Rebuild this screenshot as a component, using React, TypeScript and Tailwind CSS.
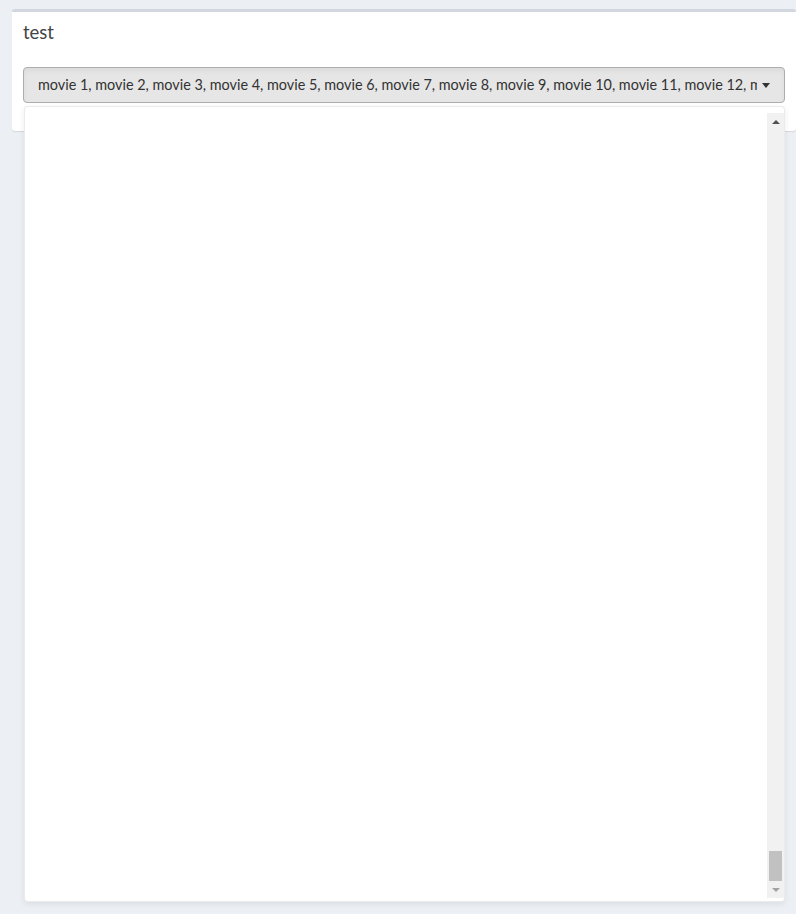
import React from 'react';

const movies = Array.from({ length: 14 }, (_, i) => `movie ${i + 1}`);

export default function App() {
    return (
        <div className="min-h-[914px] bg-[#ecf0f5] pt-[9px] pl-[12px] overflow-hidden" style={{ fontFamily: 'Lato, "Open Sans", sans-serif' }}>
            <div className="w-[784px] bg-white border-t-[3px] border-[#d2d6de] rounded-[3px] shadow-[0_1px_1px_rgba(0,0,0,0.1)]">
                <div className="px-[11px] pt-[10px]">
                    <h3 className="text-[18.5px] leading-[20px] text-[#444]">test</h3>
                </div>

                <div className="px-[11px] pt-[25px] pb-[28px]">
                    <div className="relative w-[762px]">
                        <button className="w-full h-[36px] flex items-center bg-[#e6e6e6] border border-[#adadad] rounded-[4px] pl-[14px] pr-[14px] text-[14.4px] text-[#333] shadow-[inset_0_3px_5px_rgba(0,0,0,0.05)]">
                            <span className="flex-1 overflow-hidden whitespace-nowrap text-left">{movies.join(', ')}</span>
                            <span className="ml-[5px] w-0 h-0 border-l-[4px] border-r-[4px] border-t-[5px] border-l-transparent border-r-transparent border-t-[#333]"></span>
                        </button>

                        <div className="absolute left-[1px] right-0 top-[39px] h-[796px] bg-white border border-[rgba(0,0,0,0.08)] rounded-[4px] shadow-[0_2px_6px_rgba(0,0,0,0.08)] pt-[6px] pb-[3px] flex">
                            <div className="flex-1"></div>
                            <div className="w-[17px] bg-[#f1f1f1] flex flex-col items-center">
                                <div className="h-[17px] flex items-center justify-center">
                                    <span className="w-0 h-0 border-l-[4px] border-r-[4px] border-b-[4px] border-l-transparent border-r-transparent border-b-[#505050]"></span>
                                </div>
                                <div className="flex-1 w-full flex flex-col justify-end px-[2px]">
                                    <div className="h-[30px] bg-[#c1c1c1]"></div>
                                </div>
                                <div className="h-[17px] flex items-center justify-center">
                                    <span className="w-0 h-0 border-l-[4px] border-r-[4px] border-t-[4px] border-l-transparent border-r-transparent border-t-[#a3a3a3]"></span>
                                </div>
                            </div>
                        </div>
                    </div>
                </div>
            </div>
        </div>
    );
}
